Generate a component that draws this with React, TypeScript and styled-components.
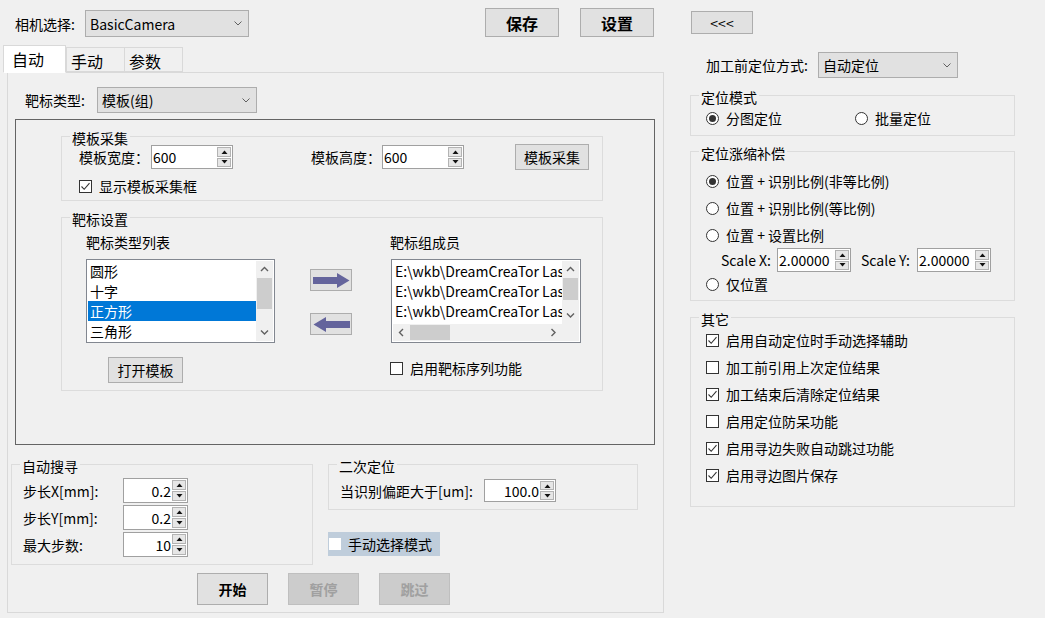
import React from "react";
import styled, { createGlobalStyle } from "styled-components";

const GlobalStyle = createGlobalStyle`
  * { box-sizing: border-box; }
  html, body { margin: 0; padding: 0; background: #f0f0f0; }
  body {
    font-family: "Noto Sans CJK SC", "Noto Sans", sans-serif;
    font-size: 14px;
    color: #000;
  }
`;

const Window = styled.div`
  width: 1045px;
  height: 618px;
  display: grid;
  grid-template-columns: 690px 1fr;
  overflow: hidden;
`;

const LeftPane = styled.div`
  display: flex;
  flex-direction: column;
`;

const RightPane = styled.div`
  display: flex;
  flex-direction: column;
  padding-top: 11px;
`;

const TopBar = styled.div`
  height: 45px;
  display: flex;
  align-items: flex-start;
  padding: 8px 0 0 15px;
`;

const Field = styled.div<{ $mt?: number; $ml?: number; $h?: number; $pl?: number }>`
  display: flex;
  align-items: center;
  flex-shrink: 0;
  height: ${(p) => p.$h ?? 26}px;
  margin-top: ${(p) => p.$mt ?? 0}px;
  margin-left: ${(p) => p.$ml ?? 0}px;
  padding-left: ${(p) => p.$pl ?? 0}px;
`;

const Label = styled.span<{ $w?: number; $ml?: number }>`
  display: inline-block;
  flex-shrink: 0;
  width: ${(p) => (p.$w ? `${p.$w}px` : "auto")};
  margin-left: ${(p) => p.$ml ?? 0}px;
  line-height: 20px;
  white-space: nowrap;
`;

const ComboFrame = styled.div<{ $w: number; $h: number }>`
  width: ${(p) => p.$w}px;
  height: ${(p) => p.$h}px;
  border: 1px solid #adadad;
  background: #e1e1e1;
  display: flex;
  align-items: center;
  justify-content: space-between;
  padding: 0 6px 0 4px;
  line-height: 20px;
  white-space: nowrap;
`;

const Button = styled.button<{ $w: number; $h: number; $bold?: boolean; $size?: number; $ml?: number; $mt?: number }>`
  width: ${(p) => p.$w}px;
  height: ${(p) => p.$h}px;
  margin: ${(p) => p.$mt ?? 0}px 0 0 ${(p) => p.$ml ?? 0}px;
  padding: 0;
  flex-shrink: 0;
  border: 1px solid #adadad;
  background: #e1e1e1;
  color: #000;
  font-family: inherit;
  font-size: ${(p) => p.$size ?? 14}px;
  font-weight: ${(p) => (p.$bold ? 700 : 400)};
  line-height: 20px;
  display: flex;
  align-items: center;
  justify-content: center;

  &:disabled {
    background: #cccccc;
    border-color: #bfbfbf;
    color: #a0a0a0;
  }
`;

const TabStrip = styled.div`
  display: flex;
  align-items: flex-end;
  height: 27px;
  padding-left: 3px;
  position: relative;
  z-index: 1;
`;

const Tab = styled.div<{ $active?: boolean; $w: number; $ml?: number }>`
  width: ${(p) => p.$w}px;
  height: ${(p) => (p.$active ? 28 : 25)}px;
  margin-bottom: ${(p) => (p.$active ? -1 : 0)}px;
  margin-left: ${(p) => p.$ml ?? 0}px;
  padding: 2px 0 0 ${(p) => (p.$active ? 8 : 4)}px;
  border: 1px solid #d9d9d9;
  border-bottom-color: ${(p) => (p.$active ? "#ffffff" : "#d9d9d9")};
  background: ${(p) => (p.$active ? "#ffffff" : "#f0f0f0")};
  font-size: 16px;
  line-height: 22px;
`;

const TabPanel = styled.div`
  margin-left: 7px;
  width: 657px;
  height: 541px;
  border: 1px solid #d9d9d9;
  background: #f0f0f0;
  display: flex;
  flex-direction: column;
`;

const DarkBox = styled.div`
  margin: 6px 0 0 7px;
  width: 640px;
  height: 326px;
  border: 1px solid #646464;
  padding: 8px 0 0 45px;
  display: flex;
  flex-direction: column;
  gap: 8px;
`;

const Group = styled.fieldset<{ $w: number; $mt?: number; $ml?: number }>`
  width: ${(p) => p.$w}px;
  margin: ${(p) => p.$mt ?? 0}px 0 0 ${(p) => p.$ml ?? 0}px;
  padding: 0;
  min-width: 0;
  border: 1px solid #dcdcdc;
  flex-shrink: 0;
`;

const Legend = styled.legend`
  margin-left: 8px;
  padding: 0 2px;
  height: 16px;
  font-size: 14px;
  line-height: 20px;
`;

const GroupBody = styled.div<{ $pad: string; $dir?: "row" | "column"; $gap?: number }>`
  display: flex;
  flex-direction: ${(p) => p.$dir ?? "column"};
  align-items: flex-start;
  gap: ${(p) => p.$gap ?? 0}px;
  padding: ${(p) => p.$pad};
`;

const Column = styled.div<{ $ml?: number; $pt?: number; $gap?: number }>`
  display: flex;
  flex-direction: column;
  align-items: flex-start;
  margin-left: ${(p) => p.$ml ?? 0}px;
  padding-top: ${(p) => p.$pt ?? 0}px;
  gap: ${(p) => p.$gap ?? 0}px;
`;

const SpinFrame = styled.div<{ $w: number; $h: number }>`
  width: ${(p) => p.$w}px;
  height: ${(p) => p.$h}px;
  border: 1px solid #a0a0a0;
  background: #fff;
  display: flex;
  flex-shrink: 0;
`;

const SpinText = styled.div<{ $right?: boolean }>`
  flex: 1;
  min-width: 0;
  display: flex;
  align-items: center;
  justify-content: ${(p) => (p.$right ? "flex-end" : "flex-start")};
  padding: 0 1px;
  overflow: hidden;
  white-space: nowrap;
`;

const SpinButtons = styled.div`
  width: 15px;
  display: flex;
  flex-direction: column;
  gap: 1px;
  padding: 1px 1px 1px 0;
`;

const SpinStep = styled.div`
  flex: 1;
  border: 1px solid #b3b3b3;
  background: #e6e6e6;
  display: flex;
  align-items: center;
  justify-content: center;
`;

const ListFrame = styled.div<{ $w: number; $hscroll?: boolean; $ml?: number; $mt?: number }>`
  width: ${(p) => p.$w}px;
  height: 84px;
  margin: ${(p) => p.$mt ?? 0}px 0 0 ${(p) => p.$ml ?? 0}px;
  border: 1px solid #828790;
  background: #fff;
  padding: 1px;
  display: grid;
  grid-template-columns: 1fr 17px;
  grid-template-rows: ${(p) => (p.$hscroll ? "1fr 17px" : "1fr")};
`;

const ListItems = styled.div`
  overflow: hidden;
  min-width: 0;
`;

const ListItem = styled.div<{ $selected?: boolean }>`
  height: 20px;
  line-height: 20px;
  padding-left: 2px;
  white-space: nowrap;
  background: ${(p) => (p.$selected ? "#0078d7" : "transparent")};
  color: ${(p) => (p.$selected ? "#fff" : "#000")};
`;

const VScroll = styled.div`
  background: #f0f0f0;
  display: flex;
  flex-direction: column;
`;

const HScroll = styled.div`
  background: #f0f0f0;
  display: flex;
`;

const ScrollArrow = styled.div`
  width: 17px;
  height: 17px;
  flex-shrink: 0;
  display: flex;
  align-items: center;
  justify-content: center;
`;

const ScrollTrack = styled.div<{ $horizontal?: boolean }>`
  flex: 1;
  display: flex;
  flex-direction: ${(p) => (p.$horizontal ? "row" : "column")};
`;

const Thumb = styled.div<{ $size: number; $horizontal?: boolean }>`
  background: #cdcdcd;
  ${(p) =>
    p.$horizontal
      ? `width: ${p.$size}px; margin: 1px 0;`
      : `height: ${p.$size}px; margin: 0 1px;`}
`;

const Corner = styled.div`
  background: #f0f0f0;
`;

const CheckRow = styled.div<{ $mt?: number }>`
  display: flex;
  align-items: center;
  height: 20px;
  gap: 7px;
  margin-top: ${(p) => p.$mt ?? 0}px;
  white-space: nowrap;
  flex-shrink: 0;
`;

const Box = styled.span`
  width: 13px;
  height: 13px;
  border: 1px solid #333;
  background: #fff;
  display: flex;
  align-items: center;
  justify-content: center;
  flex-shrink: 0;
`;

const RadioCircle = styled.span<{ $on?: boolean }>`
  width: 13px;
  height: 13px;
  border-radius: 50%;
  border: 1px solid #333;
  background: #fff;
  display: flex;
  align-items: center;
  justify-content: center;
  flex-shrink: 0;

  &::after {
    content: "";
    width: 7px;
    height: 7px;
    border-radius: 50%;
    background: ${(p) => (p.$on ? "#333" : "transparent")};
  }
`;

const RadioRow = styled.div<{ $w?: number; $mt?: number }>`
  display: flex;
  align-items: center;
  gap: 7px;
  height: 20px;
  width: ${(p) => (p.$w ? `${p.$w}px` : "auto")};
  margin-top: ${(p) => p.$mt ?? 0}px;
  white-space: nowrap;
  flex-shrink: 0;
`;

const ManualToggle = styled.div`
  width: 112px;
  height: 24px;
  margin-top: 22px;
  padding-left: 1px;
  background: #bfcddb;
  display: flex;
  align-items: center;
  gap: 7px;
  white-space: nowrap;
`;

const PlainBox = styled.span`
  width: 12px;
  height: 12px;
  background: #fff;
  flex-shrink: 0;
`;

const BottomRow = styled.div`
  display: flex;
  align-items: flex-start;
  margin: 11px 0 0 3px;
`;

const ButtonRow = styled.div`
  display: flex;
  gap: 20px;
  margin: 8px 0 0 189px;
`;

const ScaleRow = styled.div`
  display: flex;
  align-items: center;
  height: 24px;
  margin: 3px 0 0 15px;
`;

/* ---------- small drawings ---------- */

const Chevron = () => (
  <svg width="8" height="5" viewBox="0 0 8 5">
    <polyline points="0.5,0.5 4,4 7.5,0.5" fill="none" stroke="#606060" strokeWidth="1" />
  </svg>
);

const Caret = ({ dir }: { dir: "up" | "down" | "left" | "right" }) => {
  const pts = {
    up: "1,5 4.5,1.5 8,5",
    down: "1,1.5 4.5,5 8,1.5",
    left: "5,1 1.5,4.5 5,8",
    right: "1.5,1 5,4.5 1.5,8",
  }[dir];
  const horizontal = dir === "left" || dir === "right";
  return (
    <svg width={horizontal ? 7 : 9} height={horizontal ? 9 : 7} viewBox={horizontal ? "0 0 7 9" : "0 0 9 7"}>
      <polyline points={pts} fill="none" stroke="#606060" strokeWidth="1.4" />
    </svg>
  );
};

const Tri = ({ up }: { up?: boolean }) => (
  <svg width="7" height="4" viewBox="0 0 7 4">
    <polygon points={up ? "0.5,4 3.5,0.5 6.5,4" : "0.5,0 3.5,3.5 6.5,0"} fill="#111" />
  </svg>
);

const Tick = () => (
  <svg width="11" height="11" viewBox="0 0 11 11">
    <polyline points="1.5,5.5 4.2,8.3 9.5,2.2" fill="none" stroke="#333" strokeWidth="1.1" />
  </svg>
);

const MoveArrow = ({ left }: { left?: boolean }) => (
  <svg width="37" height="17" viewBox="0 0 37 17">
    <path
      d={left ? "M37 5 H13 V1 L0.5 8.5 L13 16 V12 H37 Z" : "M0 5 H24 V1 L36.5 8.5 L24 16 V12 H0 Z"}
      fill="#64649c"
    />
  </svg>
);

/* ---------- composed widgets ---------- */

const Combo = ({ w, h, value }: { w: number; h: number; value: string }) => (
  <ComboFrame $w={w} $h={h}>
    <span>{value}</span>
    <Chevron />
  </ComboFrame>
);

const Spin = ({ w, h, value, right }: { w: number; h: number; value: string; right?: boolean }) => (
  <SpinFrame $w={w} $h={h}>
    <SpinText $right={right}>{value}</SpinText>
    <SpinButtons>
      <SpinStep>
        <Tri up />
      </SpinStep>
      <SpinStep>
        <Tri />
      </SpinStep>
    </SpinButtons>
  </SpinFrame>
);

const Check = ({ label, on, mt }: { label: string; on?: boolean; mt?: number }) => (
  <CheckRow $mt={mt}>
    <Box>{on && <Tick />}</Box>
    <span>{label}</span>
  </CheckRow>
);

const Radio = ({ label, on, w, mt }: { label: string; on?: boolean; w?: number; mt?: number }) => (
  <RadioRow $w={w} $mt={mt}>
    <RadioCircle $on={on} />
    <span>{label}</span>
  </RadioRow>
);

const VBar = ({ thumb }: { thumb: number }) => (
  <VScroll>
    <ScrollArrow>
      <Caret dir="up" />
    </ScrollArrow>
    <ScrollTrack>
      <Thumb $size={thumb} />
    </ScrollTrack>
    <ScrollArrow>
      <Caret dir="down" />
    </ScrollArrow>
  </VScroll>
);

const HBar = ({ thumb }: { thumb: number }) => (
  <HScroll>
    <ScrollArrow>
      <Caret dir="left" />
    </ScrollArrow>
    <ScrollTrack $horizontal>
      <Thumb $size={thumb} $horizontal />
    </ScrollTrack>
    <ScrollArrow>
      <Caret dir="right" />
    </ScrollArrow>
  </HScroll>
);

const targetTypes = ["圆形", "十字", "正方形", "三角形"];
const members = [
  "E:\\wkb\\DreamCreaTor Laser\\Template\\mark1.bmp",
  "E:\\wkb\\DreamCreaTor Laser\\Template\\mark2.bmp",
  "E:\\wkb\\DreamCreaTor Laser\\Template\\mark3.bmp",
  "E:\\wkb\\DreamCreaTor Laser\\Template\\mark4.bmp",
];

const otherOptions = [
  { label: "启用自动定位时手动选择辅助", on: true },
  { label: "加工前引用上次定位结果", on: false },
  { label: "加工结束后清除定位结果", on: true },
  { label: "启用定位防呆功能", on: false },
  { label: "启用寻边失败自动跳过功能", on: true },
  { label: "启用寻边图片保存", on: true },
];

export default function App() {
  return (
    <>
      <GlobalStyle />
      <Window>
        <LeftPane>
          <TopBar>
            <Field $mt={2} $h={27}>
              <Label $w={70}>相机选择:</Label>
              <Combo w={164} h={27} value="BasicCamera" />
            </Field>
            <Button $w={74} $h={29} $bold $size={16} $ml={236}>
              保存
            </Button>
            <Button $w={74} $h={29} $bold $size={16} $ml={21}>
              设置
            </Button>
          </TopBar>

          <TabStrip>
            <Tab $active $w={63}>
              自动
            </Tab>
            <Tab $w={59}>手动</Tab>
            <Tab $w={59} $ml={-1}>
              参数
            </Tab>
          </TabStrip>

          <TabPanel>
            <Field $mt={14} $pl={17}>
              <Label $w={72}>靶标类型:</Label>
              <Combo w={160} h={26} value="模板(组)" />
            </Field>

            <DarkBox>
              <Group $w={542}>
                <Legend>模板采集</Legend>
                <GroupBody $pad="0 0 4px 17px">
                  <Field>
                    <Label $w={72}>模板宽度：</Label>
                    <Spin w={82} h={24} value="600" />
                    <Label $w={71} $ml={78}>
                      模板高度：
                    </Label>
                    <Spin w={82} h={24} value="600" />
                    <Button $w={74} $h={26} $ml={51}>
                      模板采集
                    </Button>
                  </Field>
                  <Check label="显示模板采集框" on mt={6} />
                </GroupBody>
              </Group>

              <Group $w={542}>
                <Legend>靶标设置</Legend>
                <GroupBody $pad="0 0 7px 24px" $dir="row">
                  <Column>
                    <Field $h={20} $mt={7}>
                      <Label>靶标类型列表</Label>
                    </Field>
                    <ListFrame $w={189} $mt={7}>
                      <ListItems>
                        {targetTypes.map((t) => (
                          <ListItem key={t} $selected={t === "正方形"}>
                            {t}
                          </ListItem>
                        ))}
                      </ListItems>
                      <VBar thumb={31} />
                    </ListFrame>
                    <Button $w={75} $h={26} $ml={22} $mt={14}>
                      打开模板
                    </Button>
                  </Column>

                  <Column $ml={35} $pt={44} $gap={22}>
                    <Button $w={42} $h={22}>
                      <MoveArrow />
                    </Button>
                    <Button $w={42} $h={22}>
                      <MoveArrow left />
                    </Button>
                  </Column>

                  <Column $ml={38}>
                    <Field $h={20} $mt={7}>
                      <Label>靶标组成员</Label>
                    </Field>
                    <ListFrame $w={190} $hscroll $ml={1} $mt={7}>
                      <ListItems>
                        {members.map((m) => (
                          <ListItem key={m}>{m}</ListItem>
                        ))}
                      </ListItems>
                      <VBar thumb={22} />
                      <HBar thumb={40} />
                      <Corner />
                    </ListFrame>
                    <Check label="启用靶标序列功能" mt={15} />
                  </Column>
                </GroupBody>
              </Group>
            </DarkBox>

            <BottomRow>
              <Group $w={302}>
                <Legend>自动搜寻</Legend>
                <GroupBody $pad="6px 0 7px 11px" $gap={2}>
                  <Field $h={25}>
                    <Label $w={100}>步长X[mm]:</Label>
                    <Spin w={65} h={25} value="0.2" right />
                  </Field>
                  <Field $h={25}>
                    <Label $w={100}>步长Y[mm]:</Label>
                    <Spin w={65} h={25} value="0.2" right />
                  </Field>
                  <Field $h={25}>
                    <Label $w={100}>最大步数:</Label>
                    <Spin w={65} h={25} value="10" right />
                  </Field>
                </GroupBody>
              </Group>

              <Column $ml={15}>
                <Group $w={310}>
                  <Legend>二次定位</Legend>
                  <GroupBody $pad="7px 0 7px 11px">
                    <Field $h={23}>
                      <Label $w={144}>当识别偏距大于[um]:</Label>
                      <Spin w={72} h={23} value="100.0" right />
                    </Field>
                  </GroupBody>
                </Group>
                <ManualToggle>
                  <PlainBox />
                  <span>手动选择模式</span>
                </ManualToggle>
              </Column>
            </BottomRow>

            <ButtonRow>
              <Button $w={71} $h={32} $bold>
                开始
              </Button>
              <Button $w={71} $h={32} $bold disabled>
                暂停
              </Button>
              <Button $w={71} $h={32} $bold disabled>
                跳过
              </Button>
            </ButtonRow>
          </TabPanel>
        </LeftPane>

        <RightPane>
          <Button $w={62} $h={23} $ml={1}>
            {"<<<"}
          </Button>

          <Field $mt={18} $pl={16}>
            <Label $w={112}>加工前定位方式:</Label>
            <Combo w={140} h={26} value="自动定位" />
          </Field>

          <Group $w={325} $mt={9}>
            <Legend>定位模式</Legend>
            <GroupBody $pad="5px 0 7px 15px" $dir="row">
              <Radio label="分图定位" on w={149} />
              <Radio label="批量定位" />
            </GroupBody>
          </Group>

          <Group $w={325} $mt={7}>
            <Legend>定位涨缩补偿</Legend>
            <GroupBody $pad="12px 0 6px 15px">
              <Radio label="位置 + 识别比例(非等比例)" on />
              <Radio label="位置 + 识别比例(等比例)" mt={7} />
              <Radio label="位置 + 设置比例" mt={7} />
              <ScaleRow>
                <Label $w={56}>Scale X:</Label>
                <Spin w={74} h={24} value="2.00000" />
                <Label $w={56} $ml={10}>
                  Scale Y:
                </Label>
                <Spin w={74} h={24} value="2.00000" />
              </ScaleRow>
              <Radio label="仅位置" mt={2} />
            </GroupBody>
          </Group>

          <Group $w={325} $mt={8}>
            <Legend>其它</Legend>
            <GroupBody $pad="5px 0 21px 15px" $gap={7}>
              {otherOptions.map((o) => (
                <Check key={o.label} label={o.label} on={o.on} />
              ))}
            </GroupBody>
          </Group>
        </RightPane>
      </Window>
    </>
  );
}
